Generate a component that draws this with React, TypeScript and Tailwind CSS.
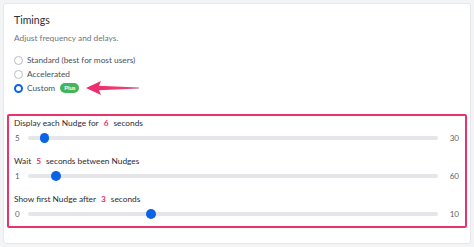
import React from "react";

type SliderRow = {
  before: string;
  value: number;
  after: string;
  min: number;
  max: number;
};

const sliders: SliderRow[] = [
  { before: "Display each Nudge for", value: 6, after: "seconds", min: 5, max: 30 },
  { before: "Wait", value: 5, after: "seconds between Nudges", min: 1, max: 60 },
  { before: "Show first Nudge after", value: 3, after: "seconds", min: 0, max: 10 },
];

const options = ["Standard (best for most users)", "Accelerated", "Custom"];

const Radio = ({ checked }: { checked: boolean }) =>
  checked ? (
    <span className="w-[9px] h-[9px] rounded-full border-[2.5px] border-[#0b63e5] bg-white shrink-0" />
  ) : (
    <span className="w-[9px] h-[9px] rounded-full border border-[#b9bcc2] bg-white shrink-0" />
  );

const Arrow = () => (
  <svg width="54" height="16" viewBox="0 0 54 16" className="ml-[3px]">
    <defs>
      <linearGradient id="tail" x1="0" x2="1" y1="0" y2="0">
        <stop offset="0" stopColor="#ee2f6e" />
        <stop offset="0.75" stopColor="#ee3f73" />
        <stop offset="1" stopColor="#a8707f" />
      </linearGradient>
    </defs>
    <polygon points="12,5.8 53,7.4 53,8.6 12,10.2" fill="url(#tail)" />
    <polygon points="0,8 15,1 12,8 15,15" fill="#ee2f6e" />
  </svg>
);

const Slider = ({ row }: { row: SliderRow }) => {
  const pct = ((row.value - row.min) / (row.max - row.min)) * 100;
  return (
    <div className="flex flex-col">
      <div className="flex items-center h-[14px] text-[8.3px] text-[#2a2d32]">
        <span>{row.before}</span>
        <span className="mx-[5px] font-bold text-[#e8336b]">{row.value}</span>
        <span>{row.after}</span>
      </div>
      <div className="flex items-center h-[16px] text-[8px] text-[#5d6168]">
        <span className="w-[12px] pl-[1px]">{row.min}</span>
        <div className="relative flex-1 h-[4px] rounded-full bg-[#e4e6ea] mx-[2px]">
          <span
            className="absolute top-1/2 w-[9.5px] h-[9.5px] -ml-[4.75px] -mt-[4.75px] rounded-full bg-[#0b63e5]"
            style={{ left: `${pct}%` }}
          />
        </div>
        <span className="w-[19px] text-right">{row.max}</span>
      </div>
    </div>
  );
};

export default function App() {
  return (
    <div
      className="w-[474px] h-[247px] bg-[#f3f4f6] p-[3px]"
      style={{ fontFamily: "Lato, 'Open Sans', sans-serif" }}
    >
      <div className="h-[241px] bg-white border border-[#e6e7ea] rounded-[3px] px-[3px] pt-[8px]">
        <div className="px-[7px]">
          <h2 className="text-[10.5px] leading-[16px] text-[#2b2e33]">Timings</h2>
          <p className="mt-[3px] text-[8.3px] leading-[14px] text-[#6f757e]">Adjust frequency and delays.</p>
          <div className="mt-[8px] flex flex-col">
            {options.map((o, i) => (
              <label key={o} className="flex items-center gap-[4px] h-[14px] text-[8.3px] text-[#4b4f56]">
                <Radio checked={i === 2} />
                <span>{o}</span>
                {i === 2 && (
                  <>
                    <span className="ml-[1px] px-[4px] h-[10px] leading-[10px] rounded-full bg-[#44b55a] text-white text-[6px] font-bold">
                      Plus
                    </span>
                    <Arrow />
                  </>
                )}
              </label>
            ))}
          </div>
        </div>
        <div className="mt-[19px] border-2 border-[#e8336b] rounded-[2px] pl-[5px] pr-[6px] pb-[4px] flex flex-col gap-[8px]">
          {sliders.map((s) => (
            <Slider key={s.before} row={s} />
          ))}
        </div>
      </div>
    </div>
  );
}
